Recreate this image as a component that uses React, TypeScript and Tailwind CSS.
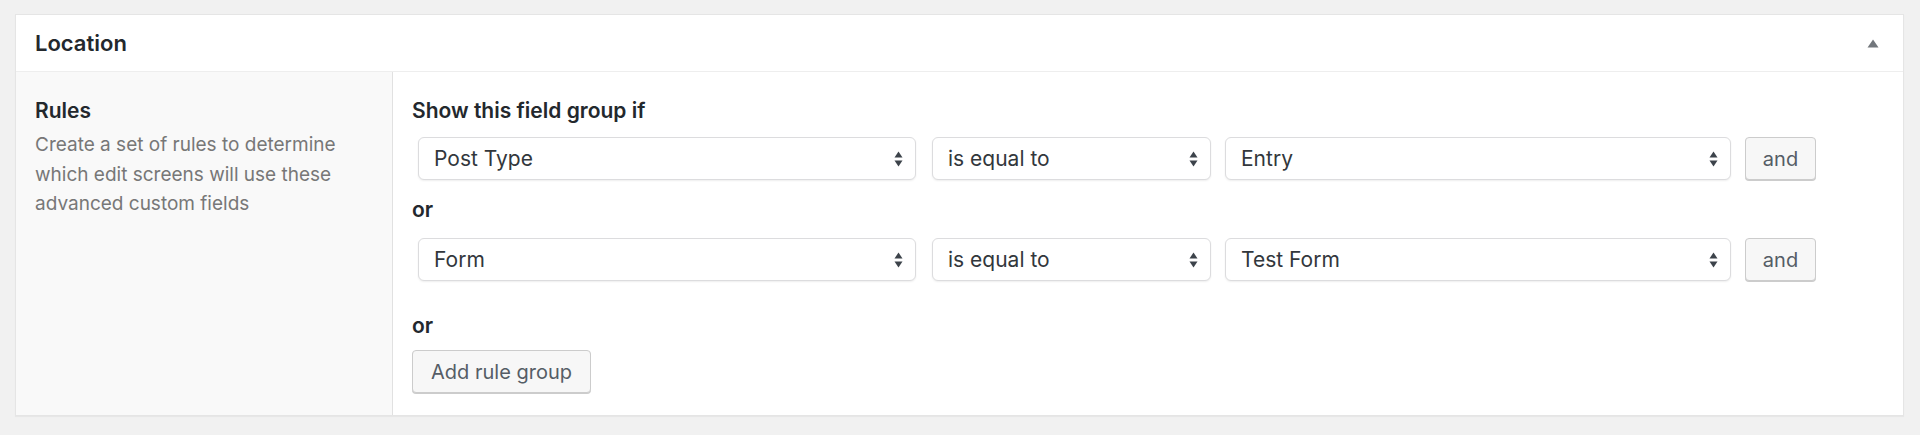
import React from "react";

const Arrows = () => (
  <svg width="9" height="16" viewBox="0 0 9 16" className="shrink-0">
    <path d="M4.5 0.5 L8.5 6.5 L0.5 6.5 Z" fill="#3c434a" />
    <path d="M4.5 15.5 L8.5 9.5 L0.5 9.5 Z" fill="#3c434a" />
  </svg>
);

function Select({ value, width }: { value: string; width: string }) {
  return (
    <div
      className={`${width} h-[43px] flex items-center justify-between pl-[15px] pr-[12px] bg-white border border-[#dcdcde] rounded-[6px] shadow-[0_1px_2px_rgba(0,0,0,0.07)] text-[21px] text-[#32373c]`}
    >
      <span>{value}</span>
      <Arrows />
    </div>
  );
}

function Button({ children, className = "" }: { children: React.ReactNode; className?: string }) {
  return (
    <div
      className={`h-[43px] flex items-center justify-center bg-[#f7f7f7] border border-[#cccccc] rounded-[4px] shadow-[0_1px_0_#cccccc] text-[20px] text-[#555d66] ${className}`}
    >
      {children}
    </div>
  );
}

const rules = [
  ["Post Type", "is equal to", "Entry"],
  ["Form", "is equal to", "Test Form"],
];

export default function App() {
  return (
    <div
      className="min-h-[435px] bg-[#f1f1f1] pt-[14px] pl-[15px] pr-[16px] pb-[18px]"
      style={{ fontFamily: "Inter, 'Open Sans', sans-serif" }}
    >
      <div className="bg-white border border-[#e5e5e5] shadow-[0_1px_1px_rgba(0,0,0,0.04)]">
        {/* header */}
        <div className="h-[57px] flex items-center justify-between pl-[19px] pr-[24px] border-b border-[#eeeeee]">
          <h2 className="text-[22px] font-semibold text-[#23282d]">Location</h2>
          <svg width="12" height="9" viewBox="0 0 12 9">
            <path d="M6 0.5 L11.5 8.5 L0.5 8.5 Z" fill="#72777c" />
          </svg>
        </div>

        <div className="flex">
          {/* left column */}
          <div className="w-[377px] shrink-0 bg-[#f9f9f9] border-r border-[#e1e1e1] pl-[19px] pr-[20px] pt-[25px]">
            <div className="text-[21px] leading-[28px] font-semibold text-[#23282d]">Rules</div>
            <p className="mt-[5px] text-[19px] leading-[29.5px] text-[#777777]">
              Create a set of rules to determine which edit screens will use these advanced custom fields
            </p>
          </div>

          {/* right column */}
          <div className="flex-1 pl-[19px] pt-[25px] pb-[22px] text-[#23282d]">
            <div className="text-[21px] leading-[28px] font-semibold">Show this field group if</div>

            {rules.map((r, i) => (
              <div key={i}>
                {i > 0 && (
                  <div className="text-[21px] leading-[28px] font-semibold mt-[16px] mb-[14px]">or</div>
                )}
                <div className={`flex items-center pl-[6px] ${i === 0 ? "mt-[12px]" : ""}`}>
                  <Select value={r[0]} width="w-[498px]" />
                  <div className="ml-[16px]">
                    <Select value={r[1]} width="w-[279px]" />
                  </div>
                  <div className="ml-[14px]">
                    <Select value={r[2]} width="w-[506px]" />
                  </div>
                  <Button className="ml-[14px] w-[71px]">and</Button>
                </div>
              </div>
            ))}

            <div className="text-[21px] leading-[28px] font-semibold mt-[31px]">or</div>
            <Button className="mt-[10px] w-[179px]">Add rule group</Button>
          </div>
        </div>
      </div>
    </div>
  );
}
